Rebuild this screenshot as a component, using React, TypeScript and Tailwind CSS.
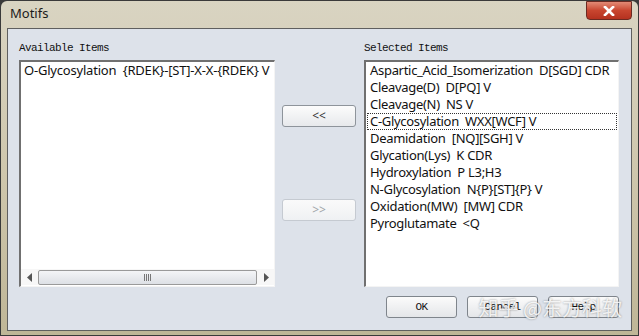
import React from 'react';

const selected = [
  ['Aspartic_Acid_Isomerization', 'D[SGD] CDR'],
  ['Cleavage(D)', 'D[PQ] V'],
  ['Cleavage(N)', 'NS V'],
  ['C-Glycosylation', 'WXX[WCF] V'],
  ['Deamidation', '[NQ][SGH] V'],
  ['Glycation(Lys)', 'K CDR'],
  ['Hydroxylation', 'P L3;H3'],
  ['N-Glycosylation', 'N{P}[ST]{P} V'],
  ['Oxidation(MW)', '[MW] CDR'],
  ['Pyroglutamate', '<Q'],
];

const ui = { fontFamily: '"Noto Sans", "Liberation Sans", sans-serif' };
const mono = { fontFamily: '"Liberation Mono", monospace' };

function Btn({ children, disabled }: { children: React.ReactNode; disabled?: boolean }) {
  return (
    <button
      className={
        disabled
          ? 'h-[22px] w-[74px] rounded-[3px] border border-[#c5cad1] bg-gradient-to-b from-[#fafafa] to-[#eff1f3] text-[12px] text-[#a0a4a8]'
          : 'h-[22px] w-[74px] rounded-[3px] border border-[#8e949b] bg-gradient-to-b from-[#fcfcfc] to-[#e7e9ec] text-[12px] text-[#333]'
      }
      style={ui}
    >
      {children}
    </button>
  );
}

function DlgBtn({ children }: { children: React.ReactNode }) {
  return (
    <button
      className="h-[22px] w-[71px] rounded-[3px] border border-[#7f858c] bg-gradient-to-b from-[#fbfbfb] to-[#e4e6e9] text-[11px] tracking-[-0.6px] text-[#111]"
      style={mono}
    >
      {children}
    </button>
  );
}

export default function App() {
  return (
    <div className="h-[336px] w-[639px] overflow-hidden bg-[#3a3a3a] p-px">
      <div className="relative flex h-full flex-col rounded-t-[6px] bg-gradient-to-b from-[#d9d4c2] via-[#cfc7ad] to-[#bfb697] px-[6px] pb-[4px]">
        {/* title bar */}
        <div className="flex h-[27px] items-center justify-between">
          <span className="pl-[3px] pb-[2px] text-[13px] text-[#1b1b1b]" style={ui}>
            Motifs
          </span>
          <div className="-mt-[8px] flex h-[19px] w-[46px] items-center justify-center rounded-b-[4px] border border-[#6b2a22] bg-gradient-to-b from-[#e28a75] via-[#c8452f] to-[#b5311f]">
            <svg width="12" height="10" viewBox="0 0 12 10">
              <path d="M2 1 L10 9 M10 1 L2 9" stroke="#fff" strokeWidth="2.6" strokeLinecap="square" />
            </svg>
          </div>
        </div>

        {/* client area */}
        <div className="flex flex-1 flex-col border border-[#5f5f5f] bg-[#dde2ea] px-[11px] pt-[12px]">
          <div className="flex">
            <div className="flex flex-col">
              <span className="h-[19px] text-[11px] leading-[14px] tracking-[-0.6px] text-[#111]" style={mono}>
                Available Items
              </span>
              <div className="flex h-[227px] w-[256px] flex-col border-l-2 border-t-2 border-r border-b border-l-[#707070] border-t-[#707070] border-r-[#f4f4f4] border-b-[#f4f4f4] bg-white">
                <div className="flex-1 overflow-hidden whitespace-pre px-[3px] text-[13px] leading-[17px] tracking-[-0.2px] text-[#111]" style={ui}>
                  {'O-Glycosylation  {RDEK}-[ST]-X-X-{RDEK} V'}
                </div>
                {/* horizontal scrollbar */}
                <div className="mb-[1px] flex h-[16px] items-center bg-[#f7f7f7]">
                  <div className="flex w-[17px] items-center justify-center">
                    <svg width="6" height="9" viewBox="0 0 6 9">
                      <path d="M5 0 L0 4.5 L5 9Z" fill="#555" />
                    </svg>
                  </div>
                  <div className="flex h-[15px] flex-1 items-center justify-center rounded-[2px] border border-[#9a9a9a] bg-gradient-to-b from-[#f4f5f7] to-[#dde0e5]">
                    <svg width="8" height="7" viewBox="0 0 8 7">
                      <path d="M0.5 0 V7 M2.5 0 V7 M4.5 0 V7 M6.5 0 V7" stroke="#777" strokeWidth="1" />
                    </svg>
                  </div>
                  <div className="flex w-[17px] items-center justify-center">
                    <svg width="6" height="9" viewBox="0 0 6 9">
                      <path d="M1 0 L6 4.5 L1 9Z" fill="#555" />
                    </svg>
                  </div>
                </div>
              </div>
            </div>

            <div className="ml-[7px] mr-[8px] flex flex-col pt-[64px]">
              <Btn>&lt;&lt;</Btn>
              <div className="h-[72px]" />
              <Btn disabled>&gt;&gt;</Btn>
            </div>

            <div className="flex flex-col">
              <span className="h-[19px] text-[11px] leading-[14px] tracking-[-0.6px] text-[#111]" style={mono}>
                Selected Items
              </span>
              <div className="h-[227px] w-[255px] border-l-2 border-t-2 border-r border-b border-l-[#707070] border-t-[#707070] border-r-[#f4f4f4] border-b-[#f4f4f4] bg-white px-[1px]">
                {selected.map(([n, p], i) => (
                  <div
                    key={n}
                    className={
                      i === 3
                        ? 'h-[17px] whitespace-pre border border-dotted border-[#333] px-[2px] text-[13px] leading-[15px] tracking-[-0.3px] text-[#111]'
                        : 'h-[17px] whitespace-pre border border-transparent px-[2px] text-[13px] leading-[15px] tracking-[-0.3px] text-[#111]'
                    }
                    style={ui}
                  >
                    {n + '  ' + p}
                  </div>
                ))}
              </div>
            </div>
          </div>

          <div className="mt-[9px] flex justify-end gap-[10px] pr-[1px]">
            <DlgBtn>OK</DlgBtn>
            <DlgBtn>Cancel</DlgBtn>
            <DlgBtn>Help</DlgBtn>
          </div>
        </div>

        {/* watermark */}
        <div
          className="absolute bottom-[15px] right-[16px] whitespace-pre text-[20px] leading-[24px] text-white/85 [text-shadow:0_0_2px_rgba(0,0,0,0.45)]"
          style={{ fontFamily: '"Noto Sans CJK SC", sans-serif' }}
        >
          {'知乎 @东方科软'}
        </div>
      </div>
    </div>
  );
}
